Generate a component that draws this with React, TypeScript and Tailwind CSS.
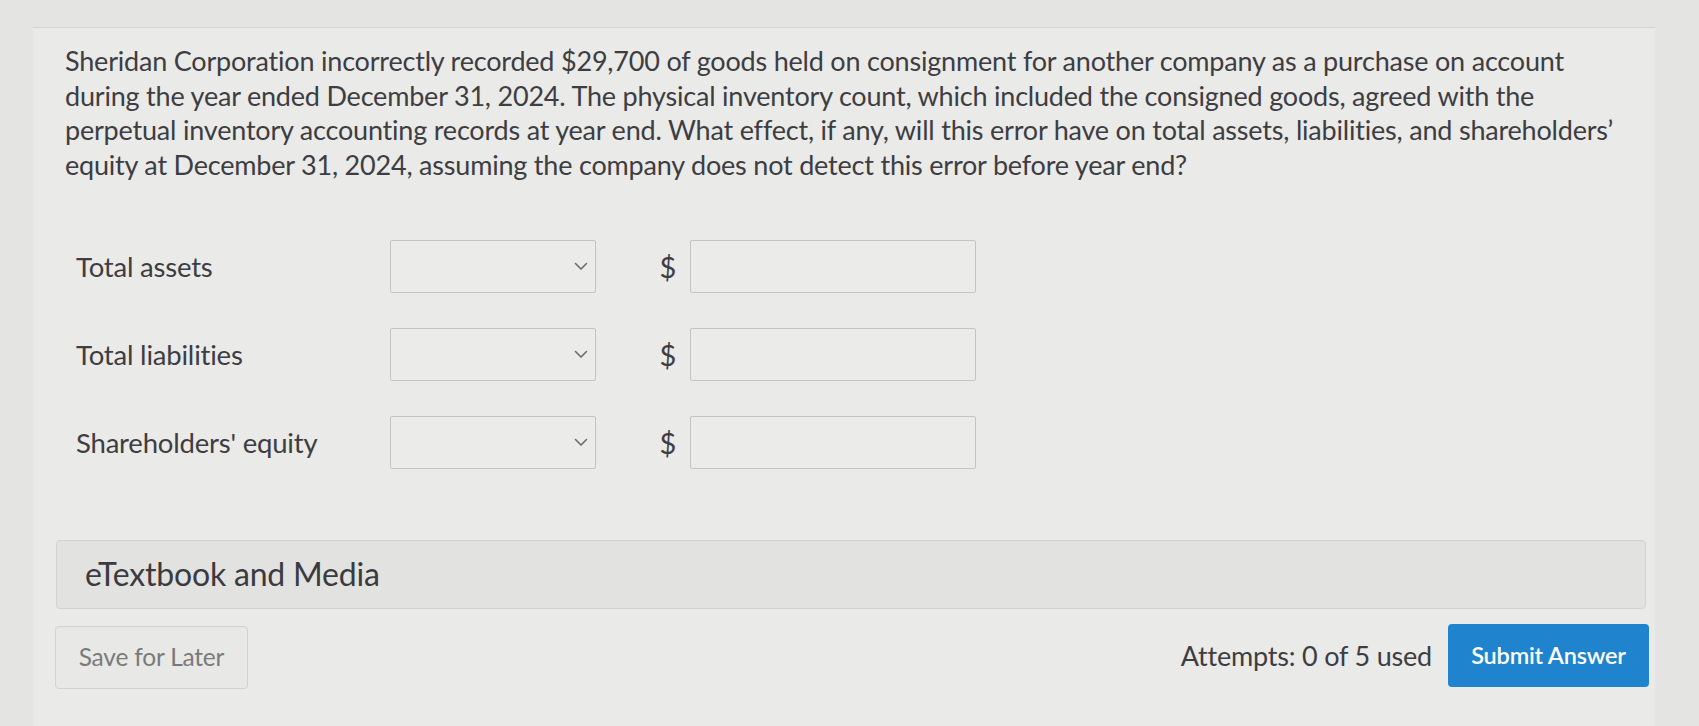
import React from "react";

const rows = ["Total assets", "Total liabilities", "Shareholders' equity"];

function Chevron() {
  return (
    <svg width="14" height="9" viewBox="0 0 14 9" fill="none">
      <path d="M1.5 1.5 L7 7 L12.5 1.5" stroke="#6b6b6b" strokeWidth="1.6" strokeLinecap="round" strokeLinejoin="round" />
    </svg>
  );
}

export default function App() {
  return (
    <div
      className="w-[1699px] h-[726px] overflow-hidden bg-[#e4e4e2] text-[#3d3d42]"
      style={{ fontFamily: "Lato, 'Open Sans', sans-serif" }}
    >
      <div className="ml-[33px] mt-[27px] w-[1622px] h-[699px] bg-[#eaeae8] border-t border-[#d6d6d4]">
        <div className="pl-[32px] pt-[16px] text-[27px] leading-[34.7px] tracking-[-0.2px]">
          <div className="whitespace-nowrap">Sheridan Corporation incorrectly recorded $29,700 of goods held on consignment for another company as a purchase on account</div>
          <div className="whitespace-nowrap">during the year ended December 31, 2024. The physical inventory count, which included the consigned goods, agreed with the</div>
          <div className="whitespace-nowrap">perpetual inventory accounting records at year end. What effect, if any, will this error have on total assets, liabilities, and shareholders’</div>
          <div className="whitespace-nowrap">equity at December 31, 2024, assuming the company does not detect this error before year end?</div>
        </div>

        <div className="mt-[57px] flex flex-col gap-[35px] pl-[43px]">
          {rows.map((r) => (
            <div key={r} className="flex items-center h-[53px]">
              <div className="w-[314px] text-[27.5px] tracking-[-0.2px] whitespace-nowrap">{r}</div>
              <div className="w-[206px] h-[53px] border border-[#c4c4c2] rounded-[2px] bg-[#ebebe9] flex items-center justify-end pr-[7px]">
                <Chevron />
              </div>
              <div className="w-[94px] flex justify-center pl-[50px] text-[29px] text-[#3d3d42]">$</div>
              <div className="w-[286px] h-[53px] border border-[#c4c4c2] rounded-[2px] bg-[#ebebe9]" />
            </div>
          ))}
        </div>

        <div className="mt-[71px] ml-[23px] w-[1590px] h-[69px] rounded-[4px] border border-[#d2d2d0] bg-[#e2e2e0] flex items-center pl-[28px] text-[32px] tracking-[-0.2px] text-[#3a3a3f]">
          eTextbook and Media
        </div>

        <div className="mt-[14px] ml-[22px] w-[1594px] flex items-center justify-between">
          <div className="w-[193px] h-[63px] rounded-[4px] border border-[#d2d2d0] bg-[#e8e8e6] flex items-center justify-center text-[24.5px] tracking-[-0.2px] text-[#7a7a7a] mt-[3px]">
            Save for Later
          </div>
          <div className="flex items-center gap-[16px]">
            <div className="text-[27px] tracking-[-0.2px] text-[#3d3d42]">Attempts: 0 of 5 used</div>
            <div className="w-[201px] h-[63px] rounded-[4px] bg-[#1f84cd] flex items-center justify-center text-[23.5px] font-semibold tracking-[-0.2px] text-white">
              Submit Answer
            </div>
          </div>
        </div>
      </div>
    </div>
  );
}
